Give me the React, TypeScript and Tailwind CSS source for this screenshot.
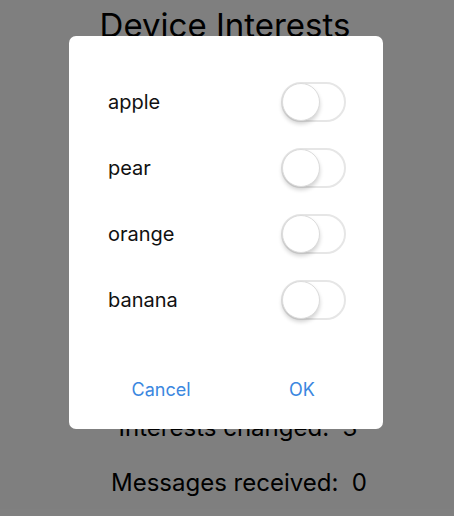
import { useState } from "react";

const font = { fontFamily: "Inter, Roboto, 'Liberation Sans', sans-serif" };

const fruits = ["apple", "pear", "orange", "banana"];

function Toggle({ on, onChange }: { on: boolean; onChange: () => void }) {
  return (
    <button
      onClick={onChange}
      className={`relative w-[65px] h-[40px] rounded-full border-2 transition-colors ${
        on ? "bg-[#4cd964] border-[#4cd964]" : "bg-white border-[#e6e6e6]"
      }`}
    >
      <span
        className={`absolute top-[-1px] w-[38px] h-[38px] rounded-full bg-white border border-[#dcdcdc] shadow-[0_3px_4px_rgba(0,0,0,0.18)] transition-all ${
          on ? "left-[24px]" : "left-[-1px]"
        }`}
      />
    </button>
  );
}

export default function App() {
  const [checked, setChecked] = useState<Record<string, boolean>>({});

  return (
    <div style={font} className="relative w-[454px] h-[516px] overflow-hidden bg-white text-black">
      {/* Page behind the dialog */}
      <div className="flex flex-col items-center">
        <h1 className="text-[33px] leading-none mt-[9px] pr-[4px]">Device Interests</h1>
        <p className="text-[24px] leading-none mt-[374px] pl-[22px]">Interests changed:&nbsp; 3</p>
        <p className="text-[24px] leading-none mt-[31px] pl-[24px]">Messages received:&nbsp; 0</p>
      </div>

      {/* Overlay */}
      <div className="absolute inset-0 bg-black/50">
        <div className="absolute left-[69px] top-[36px] w-[314px] h-[393px] bg-white rounded-[7px] flex flex-col pt-[33px] pl-[39px] pr-[37px]">
          {fruits.map((f) => (
            <div key={f} className="h-[66px] flex items-center justify-between">
              <span className="text-[20px] text-[#111]">{f}</span>
              <Toggle on={!!checked[f]} onChange={() => setChecked((c) => ({ ...c, [f]: !c[f] }))} />
            </div>
          ))}
          <div className="mt-[32px] h-[48px] flex items-center justify-between text-[18px] text-[#3b87e0] -ml-[39px] -mr-[37px]">
            <button className="w-[184px]">Cancel</button>
            <button className="w-[60px] mr-[51px]">OK</button>
          </div>
        </div>
      </div>
    </div>
  );
}
